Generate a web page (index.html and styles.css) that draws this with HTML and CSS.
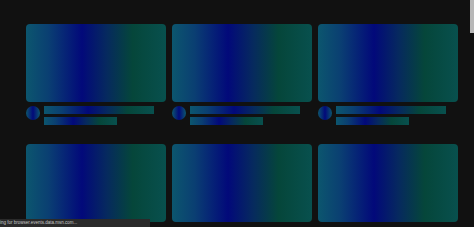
FILE: index.html
```html
<!DOCTYPE html>
<html lang="en">
<head>
    <title>Loading</title>
    <link rel="stylesheet" href="styles.css">
</head>
<body>
    <div class="feed">
        <div class="card">
            <div class="thumb shimmer"></div>
            <div class="meta">
                <div class="avatar shimmer"></div>
                <div class="lines">
                    <div class="line long shimmer"></div>
                    <div class="line short shimmer"></div>
                </div>
            </div>
        </div>
        <div class="card">
            <div class="thumb shimmer"></div>
            <div class="meta">
                <div class="avatar shimmer"></div>
                <div class="lines">
                    <div class="line long shimmer"></div>
                    <div class="line short shimmer"></div>
                </div>
            </div>
        </div>
        <div class="card">
            <div class="thumb shimmer"></div>
            <div class="meta">
                <div class="avatar shimmer"></div>
                <div class="lines">
                    <div class="line long shimmer"></div>
                    <div class="line short shimmer"></div>
                </div>
            </div>
        </div>
        <div class="card">
            <div class="thumb shimmer"></div>
        </div>
        <div class="card">
            <div class="thumb shimmer"></div>
        </div>
        <div class="card">
            <div class="thumb shimmer"></div>
        </div>
    </div>

    <!-- overlay scrollbar thumb -->
    <div class="scroll-thumb"></div>

    <!-- browser status bubble -->
    <div class="status">ing for browser.events.data.msn.com...</div>
</body>
</html>
```

FILE: styles.css
```css
body {
    margin: 0;
    background-color: #111111;
    font-family: "Liberation Sans", Arial, sans-serif;
    overflow: hidden;
}

.feed {
    display: grid;
    grid-template-columns: repeat(3, 140px);
    column-gap: 6px;
    row-gap: 19px;
    padding: 24px 0 0 26px;
}

.shimmer {
    background: linear-gradient(90deg, #0c566e 0%, #0a3f72 16%, #02097a 40%, #062a5e 58%, #05463a 76%, #08504e 100%);
}

.thumb {
    height: 78px;
    border-radius: 4px;
}

.meta {
    display: flex;
    gap: 4px;
    margin-top: 4px;
}

.avatar {
    width: 14px;
    height: 14px;
    border-radius: 50%;
    background: linear-gradient(90deg, #0c566e 0%, #02097a 50%, #0c566e 100%);
}

.lines {
    display: flex;
    flex-direction: column;
    gap: 3px;
}

.line {
    height: 8px;
}

.line.long {
    width: 110px;
}

.line.short {
    width: 73px;
}

.scroll-thumb {
    position: fixed;
    top: 0;
    right: 0;
    width: 4px;
    height: 33px;
    background-color: #b8b8b8;
}

.status {
    position: fixed;
    left: 0;
    bottom: 0;
    width: 150px;
    height: 8px;
    padding-top: 1px;
    box-sizing: border-box;
    background-color: #2a2a2a;
    font-size: 4.5px;
    line-height: 6px;
    color: #c8c8c8;
    white-space: nowrap;
}
```
